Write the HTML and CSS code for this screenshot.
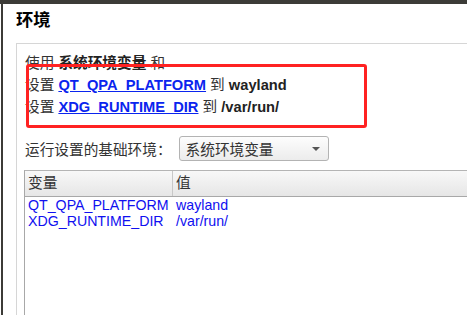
FILE: index.html
```html
<!DOCTYPE html>
<html lang="zh-CN">
<head>
    <meta charset="UTF-8">
    <title>环境</title>
    <link rel="stylesheet" href="styles.css">
</head>
<body>
    <div class="topbar"></div>
    <div class="frame">
        <h1 class="title">环境</h1>

        <div class="group">
            <div class="summary">
                <p>使用 <b>系统环境变量</b> 和</p>
                <p>设置 <a href="#">QT_QPA_PLATFORM</a> 到 <b>wayland</b></p>
                <p>设置 <a href="#">XDG_RUNTIME_DIR</a> 到 <b>/var/run/</b></p>
                <!-- annotation box drawn over the changed lines -->
                <div class="highlight"></div>
            </div>

            <div class="base-row">
                <span>运行设置的基础环境：</span>
                <div class="combo">
                    <span>系统环境变量</span>
                    <span class="arrow"></span>
                </div>
            </div>

            <div class="env-table">
                <div class="head">
                    <div class="cell name">变量</div>
                    <div class="cell">值</div>
                </div>
                <div class="row">
                    <div class="cell name">QT_QPA_PLATFORM</div>
                    <div class="cell">wayland</div>
                </div>
                <div class="row">
                    <div class="cell name">XDG_RUNTIME_DIR</div>
                    <div class="cell">/var/run/</div>
                </div>
            </div>
        </div>
    </div>
</body>
</html>
```

FILE: styles.css
```css
* {
    box-sizing: border-box;
}

html, body {
    margin: 0;
    padding: 0;
    height: 100%;
    overflow: hidden;
    background-color: #fff;
}

body {
    display: flex;
    flex-direction: column;
    font-family: "Liberation Sans", "Noto Sans CJK SC", sans-serif;
    font-size: 14.67px;
    color: #333;
}

.topbar {
    height: 4px;
    flex-shrink: 0;
    background-color: #3c3b37;
}

.frame {
    flex: 1;
    display: flex;
    flex-direction: column;
    margin-left: 1px;
    border-left: 2px solid #3c3b37;
    padding-left: 13px;
}

.title {
    margin: 0;
    padding-top: 6px;
    height: 39px;
    line-height: 20px;
    font-size: 17.3px;
    font-weight: bold;
    color: #000;
}

.group {
    flex: 1;
    display: flex;
    flex-direction: column;
    border-top: 1px solid #d6d6d6;
    border-left: 1px solid #d6d6d6;
    padding: 8px 0 0 8px;
}

.summary {
    position: relative;
}

.summary p {
    margin: 0;
    line-height: 22px;
    white-space: nowrap;
}

.summary b {
    color: #222;
}

.summary a {
    color: #0a24ee;
    font-weight: bold;
}

.highlight {
    position: absolute;
    left: 1px;
    top: 12px;
    width: 341px;
    height: 64px;
    border: 3px solid #ff2222;
    border-radius: 3px;
}

.base-row {
    display: flex;
    align-items: center;
    gap: 7px;
    margin-top: 18px;
    height: 25px;
}

.combo {
    display: flex;
    align-items: center;
    justify-content: space-between;
    width: 150px;
    height: 25px;
    padding: 0 6px;
    border: 1px solid #b3b3b3;
    border-radius: 3px;
    background: linear-gradient(#fdfdfd, #ececec);
    color: #333;
}

.arrow {
    width: 0;
    height: 0;
    border-left: 4px solid transparent;
    border-right: 4px solid transparent;
    border-top: 4px solid #555;
    margin-right: 2px;
}

.env-table {
    flex: 1;
    margin-top: 9px;
    margin-left: -1px;
    border-top: 1px solid #b4b4b4;
    border-left: 1px solid #a8a8a8;
}

.head {
    display: flex;
    height: 26px;
    line-height: 25px;
    background: linear-gradient(#f8f8f8, #e6e6e6);
    border-bottom: 1px solid #a8a8a8;
    color: #333;
}

.head .name {
    border-right: 1px solid #c8c8c8;
}

.row {
    display: flex;
    height: 16px;
    line-height: 16px;
    color: #1010f0;
    font-size: 14.2px;
}

.cell {
    padding-left: 3px;
    white-space: nowrap;
}

.cell.name {
    width: 148px;
}
```
